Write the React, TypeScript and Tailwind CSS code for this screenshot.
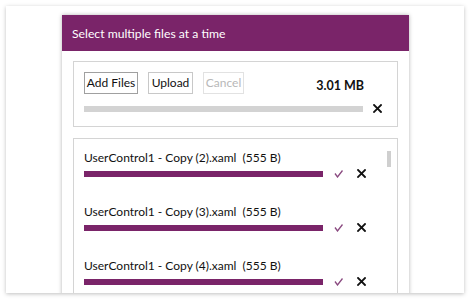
import React from 'react';

const font = { fontFamily: '"Segoe UI", Lato, "Noto Sans", sans-serif' };

function CloseIcon() {
  return (
    <svg width="9" height="9" viewBox="0 0 9 9" className="shrink-0">
      <path d="M1 1 L8 8 M8 1 L1 8" stroke="#111" strokeWidth="1.8" strokeLinecap="square" />
    </svg>
  );
}

function CheckIcon() {
  return (
    <svg width="9" height="8" viewBox="0 0 9 8" className="shrink-0">
      <path d="M1 3.5 L3.5 7 L8.5 0.5" stroke="#8a4a80" strokeWidth="1.3" fill="none" />
    </svg>
  );
}

const files = [
  'UserControl1 - Copy (2).xaml',
  'UserControl1 - Copy (3).xaml',
  'UserControl1 - Copy (4).xaml',
];

export default function App() {
  return (
    <div className="w-[470px] h-[300px] bg-white p-[6px]" style={font}>
      <div className="w-[458px] h-[287px] bg-white overflow-hidden shadow-[0_1px_4px_rgba(0,0,0,0.25)] pt-[9px] pl-[56px]">
        <div className="w-[347px] h-[300px] bg-white shadow-[0_0_4px_rgba(0,0,0,0.3)]">
          {/* header */}
          <div className="h-[36px] bg-[#7a2469] flex items-center px-[10px] pt-[2px] text-white text-[12.2px]">
            Select multiple files at a time
          </div>

          <div className="px-[11px] pt-[10px]">
            {/* toolbar box */}
            <div className="w-[325px] h-[66px] border border-[#d4d4d4] pl-[10px] pr-[15px] pt-[10px]">
              <div className="flex items-center h-[22px] text-[12px] whitespace-nowrap">
                <button className="h-[22px] w-[54px] border border-[#a0a0a0] text-[#111] leading-none">Add Files</button>
                <button className="h-[22px] w-[45px] ml-[10px] border border-[#c8c8c8] text-[#111] leading-none">Upload</button>
                <button className="h-[22px] w-[41px] ml-[10px] border border-[#e2e2e2] text-[#b8b8b8] leading-none">Cancel</button>
                <span className="ml-auto mr-[18px] mt-[6px] font-bold text-[12.5px] text-[#111]">3.01 MB</span>
              </div>
              <div className="flex items-center mt-[10px]">
                <div className="w-[280px] h-[6px] bg-[#d3d3d3]" />
                <div className="ml-[10px]"><CloseIcon /></div>
              </div>
            </div>

            {/* file list */}
            <div className="relative w-[325px] h-[200px] border border-[#d4d4d4] mt-[11px] pl-[10px] pt-[11px]">
              <div className="absolute right-[6px] top-[12px] w-[4px] h-[16px] bg-[#cfcfcf]" />
              {files.map((f) => (
                <div key={f} className="h-[54px]">
                  <div className="text-[12px] text-[#111] leading-[16px] whitespace-pre">{f}  (555 B)</div>
                  <div className="flex items-center mt-[3px]">
                    <div className="w-[239px] h-[6px] bg-[#7a2469]" />
                    <div className="ml-[11px]"><CheckIcon /></div>
                    <div className="ml-[14px]"><CloseIcon /></div>
                  </div>
                </div>
              ))}
            </div>
          </div>
        </div>
      </div>
    </div>
  );
}
